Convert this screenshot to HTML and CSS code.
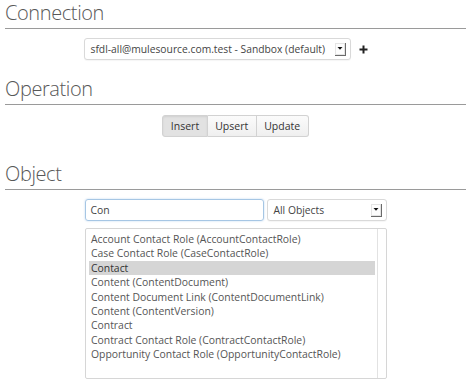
FILE: index.html
```html
<!DOCTYPE html>
<html>
<head>
<meta charset="utf-8">
<link rel="stylesheet" href="styles.css">
</head>
<body>
<div class="page">
  <section class="sec sec-connection">
    <h2 class="heading">Connection</h2>
    <div class="controls">
      <div class="row">
        <div class="select select-conn">
          <span class="select-text">sfdl-all@mulesource.com.test - Sandbox (default)</span>
          <svg class="arrow" width="11" height="13" viewBox="0 0 11 13"><rect x="0.5" y="0.5" width="9" height="11" fill="#fdfdfd" stroke="#e4e4e4"/><path d="M10.5 0V13M0 12.5H11" stroke="#6a6a6a"/><path d="M2.5 4H7.5L5 6.8Z" fill="#111"/></svg>
        </div>
        <svg class="plus" width="9" height="9" viewBox="0 0 9 9"><path d="M4.5 0.5V8.5M0.5 4.5H8.5" stroke="#222" stroke-width="2"/></svg>
      </div>
    </div>
  </section>

  <section class="sec sec-operation">
    <h2 class="heading">Operation</h2>
    <div class="btn-group">
      <span class="btn active">Insert</span>
      <span class="btn">Upsert</span>
      <span class="btn">Update</span>
    </div>
  </section>

  <section class="sec sec-object">
    <h2 class="heading">Object</h2>
    <div class="controls">
      <div class="row">
        <div class="input">Con</div>
        <div class="select select-obj">
          <span class="select-text">All Objects</span>
          <svg class="arrow" width="11" height="13" viewBox="0 0 11 13"><rect x="0.5" y="0.5" width="9" height="11" fill="#fdfdfd" stroke="#e4e4e4"/><path d="M10.5 0V13M0 12.5H11" stroke="#6a6a6a"/><path d="M2.5 4H7.5L5 6.8Z" fill="#111"/></svg>
        </div>
      </div>
      <div class="listbox">
        <ul class="options">
          <li>Account Contact Role (AccountContactRole)</li>
          <li>Case Contact Role (CaseContactRole)</li>
          <li class="selected">Contact</li>
          <li>Content (ContentDocument)</li>
          <li>Content Document Link (ContentDocumentLink)</li>
          <li>Content (ContentVersion)</li>
          <li>Contract</li>
          <li>Contract Contact Role (ContractContactRole)</li>
          <li>Opportunity Contact Role (OpportunityContactRole)</li>
        </ul>
        <div class="track"></div>
      </div>
    </div>
  </section>
</div>
</body>
</html>
```

FILE: styles.css
```css
* { box-sizing: border-box; }
html, body {
  margin: 0;
  padding: 0;
  background: #ffffff;
}
body {
  font-family: "Open Sans", "DejaVu Sans", sans-serif;
  color: #555555;
}
.page {
  padding: 0 8px 0 5px;
}
.sec-connection { margin-bottom: 16px; }
.sec-operation { margin-bottom: 24px; }

.heading {
  margin: 0;
  font-size: 20px;
  font-weight: 300;
  letter-spacing: -0.4px;
  line-height: 24px;
  padding: 1px 0 3px 0;
  color: #585858;
  border-bottom: 1px solid #9a9a9a;
}

.controls {
  width: 302px;
  margin: 0 auto;
}
.row {
  display: flex;
  align-items: center;
  margin-top: 9px;
}

.select {
  height: 22px;
  border: 1px solid #d9d9d9;
  border-radius: 3px;
  background: #fff;
  box-shadow: 0 1px 1px rgba(0,0,0,0.04);
  display: flex;
  align-items: center;
  justify-content: space-between;
  padding: 0 4px 0 6px;
  font-size: 10.3px;
  color: #444;
}
.select-text {
  white-space: nowrap;
  line-height: 20px;
}
.select-conn { width: 267px; margin-left: -1px; }
.select-obj { width: 120px; margin-left: 3px; }
.arrow { display: block; flex: none; }
.plus { display: block; margin-left: 8px; }

.input {
  width: 179px;
  height: 22px;
  border: 1px solid #a6c6e4;
  border-radius: 3px;
  box-shadow: 0 0 2px rgba(100,160,220,0.45);
  padding: 0 5px;
  font-size: 10.4px;
  line-height: 20px;
  color: #444;
}

.btn-group {
  display: flex;
  justify-content: center;
  margin-top: 10px;
}
.btn {
  display: block;
  height: 22px;
  line-height: 20px;
  padding: 0 7.5px;
  font-size: 10.5px;
  color: #333;
  border: 1px solid #d2d2d2;
  border-left-width: 0;
  background: linear-gradient(#fbfbfb, #efefef);
}
.btn:first-child {
  border-left-width: 1px;
  border-radius: 3px 0 0 3px;
}
.btn:last-child { border-radius: 0 3px 3px 0; }
.btn.active {
  background: #e2e2e2;
  box-shadow: inset 0 1px 2px rgba(0,0,0,0.08);
}

.listbox {
  margin-top: 7px;
  height: 151px;
  border: 1px solid #d6d6d6;
  border-radius: 2px;
  display: flex;
}
.options {
  flex: 1;
  list-style: none;
  margin: 0;
  padding: 3px 2px 0 3px;
  font-size: 10.4px;
  line-height: 14.375px;
  color: #555;
}
.options li {
  padding-left: 2.5px;
  white-space: nowrap;
}
.options li.selected {
  background: #d5d5d5;
  color: #333;
}
.track {
  width: 9px;
  border-left: 1px solid #e2e2e2;
}
```
